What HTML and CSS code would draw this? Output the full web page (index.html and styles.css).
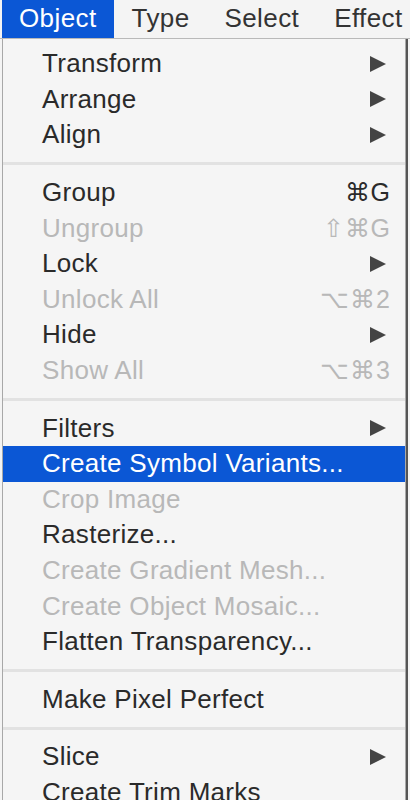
FILE: index.html
```html
<!DOCTYPE html>
<html>
<head>
<meta charset="utf-8">
<link rel="stylesheet" href="styles.css">
</head>
<body>
<div class="menubar">
  <span class="mb-item active">Object</span>
  <span class="mb-item">Type</span>
  <span class="mb-item">Select</span>
  <span class="mb-item">Effect</span>
</div>
<div class="menu">
  <div class="row"><span class="label">Transform</span><span class="arrow"></span></div>
  <div class="row"><span class="label">Arrange</span><span class="arrow"></span></div>
  <div class="row"><span class="label">Align</span><span class="arrow"></span></div>
  <div class="sep"></div>
  <div class="row"><span class="label">Group</span><span class="key">⌘G</span></div>
  <div class="row disabled"><span class="label">Ungroup</span><span class="key">⇧⌘G</span></div>
  <div class="row"><span class="label">Lock</span><span class="arrow"></span></div>
  <div class="row disabled"><span class="label">Unlock All</span><span class="key">⌥⌘2</span></div>
  <div class="row"><span class="label">Hide</span><span class="arrow"></span></div>
  <div class="row disabled"><span class="label">Show All</span><span class="key">⌥⌘3</span></div>
  <div class="sep"></div>
  <div class="row"><span class="label">Filters</span><span class="arrow"></span></div>
  <div class="row selected"><span class="label">Create Symbol Variants...</span></div>
  <div class="row disabled"><span class="label">Crop Image</span></div>
  <div class="row"><span class="label">Rasterize...</span></div>
  <div class="row disabled"><span class="label">Create Gradient Mesh...</span></div>
  <div class="row disabled"><span class="label">Create Object Mosaic...</span></div>
  <div class="row"><span class="label">Flatten Transparency...</span></div>
  <div class="sep"></div>
  <div class="row"><span class="label">Make Pixel Perfect</span></div>
  <div class="sep"></div>
  <div class="row"><span class="label">Slice</span><span class="arrow"></span></div>
  <div class="row"><span class="label">Create Trim Marks</span></div>
</div>
</body>
</html>
```
FILE: styles.css
```css
html, body {
  margin: 0;
  padding: 0;
}
body {
  width: 410px;
  height: 800px;
  overflow: hidden;
  background: #f4f4f4;
  font-family: "Liberation Sans", Arial, sans-serif;
  color: #2a2a2a;
}
.menubar {
  height: 39px;
  display: flex;
  align-items: stretch;
  background: #f4f4f4;
  border-bottom: 1px solid #b9b9b9;
  padding-left: 2px;
  box-sizing: border-box;
}
.mb-item {
  display: flex;
  align-items: center;
  font-size: 26px;
  letter-spacing: 0.4px;
  color: #333;
  padding: 0 17px 1px 17px;
  margin-right: 1px;
}
.mb-item.active {
  background: #0b57d5;
  color: #fff;
}
.menu {
  margin-left: 2px;
  width: 404px;
  box-sizing: border-box;
  background: #f5f5f5;
  border-left: 1px solid #a8a8a8;
  border-right: 1px solid #a8a8a8;
  padding-top: 7px;
  box-shadow: 2px 0 0 #555;
}
.row {
  height: 35.6px;
  display: flex;
  align-items: center;
  justify-content: space-between;
  padding: 0 14px 0 39px;
  font-size: 26px;
  letter-spacing: 0.3px;
  color: #2a2a2a;
}
.row.disabled {
  color: #b8b8b8;
}
.row.selected {
  background: #0b57d5;
  color: #fff;
}
.key {
  font-size: 25px;
  letter-spacing: 1px;
}
.arrow {
  width: 0;
  height: 0;
  border-top: 8px solid transparent;
  border-bottom: 8px solid transparent;
  border-left: 16px solid #444;
  margin-right: 5px;
}
.sep {
  height: 22px;
  display: flex;
  align-items: center;
}
.sep::before {
  content: "";
  display: block;
  width: 100%;
  height: 3px;
  background: #e2e2e2;
}
```
